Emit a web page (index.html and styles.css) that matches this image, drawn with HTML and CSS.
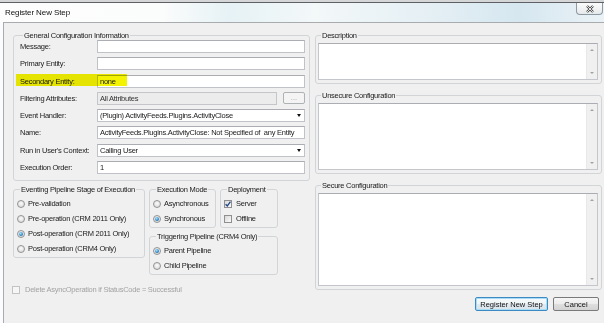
FILE: index.html
```html
<!DOCTYPE html>
<html lang="en">
<head>
    <meta charset="UTF-8">
    <meta name="viewport" content="width=device-width, initial-scale=1.0">
    <title>Register New Step</title>
    <link rel="stylesheet" href="styles.css">
</head>
<body>

<div class="window">
    <div class="strip"></div>
    <div class="titlebar">
        <span class="title">Register New Step</span>
        <button class="close">
            <svg width="10" height="8" viewBox="0 0 10 8">
                <path d="M2 1 L8 7 M8 1 L2 7" stroke="#4a4a4a" stroke-width="2.4" fill="none"/>
                <path d="M2 1 L8 7 M8 1 L2 7" stroke="#f4f4f4" stroke-width="0.9" fill="none"/>
            </svg>
        </button>
    </div>

    <div class="client">
        <div class="col-left">
            <fieldset class="group general">
                <legend>General Configuration Information</legend>
                <div class="field"><label>Message:</label><div class="input"></div></div>
                <div class="field"><label>Primary Entity:</label><div class="input"></div></div>
                <div class="field marked">
                    <label>Secondary Entity:</label><div class="input">none</div>
                    <span class="highlight"></span>
                </div>
                <div class="field">
                    <label>Filtering Attributes:</label>
                    <div class="input disabled">All Attributes</div>
                    <button class="dots">...</button>
                </div>
                <div class="field"><label>Event Handler:</label><div class="input combo">(Plugin) ActivityFeeds.Plugins.ActivityClose<span class="arrow"></span></div></div>
                <div class="field"><label>Name:</label><div class="input">ActivityFeeds.Plugins.ActivityClose: Not Specified of &nbsp;any Entity</div></div>
                <div class="field"><label>Run in User's Context:</label><div class="input combo">Calling User<span class="arrow"></span></div></div>
                <div class="field"><label>Execution Order:</label><div class="input">1</div></div>
            </fieldset>

            <div class="options">
                <fieldset class="group stage">
                    <legend>Eventing Pipeline Stage of Execution</legend>
                    <div class="opt"><span class="radio"></span>Pre-validation</div>
                    <div class="opt"><span class="radio"></span>Pre-operation (CRM 2011 Only)</div>
                    <div class="opt"><span class="radio on"></span>Post-operation (CRM 2011 Only)</div>
                    <div class="opt"><span class="radio"></span>Post-operation (CRM4 Only)</div>
                </fieldset>
                <fieldset class="group">
                    <legend>Execution Mode</legend>
                    <div class="opt"><span class="radio"></span>Asynchronous</div>
                    <div class="opt"><span class="radio on"></span>Synchronous</div>
                </fieldset>
                <fieldset class="group">
                    <legend>Deployment</legend>
                    <div class="opt"><span class="box">
                        <svg width="6" height="6" viewBox="0 0 6 6"><path d="M0.6 3.2 L2.3 5 L5.5 0.6" stroke="#23448a" stroke-width="1.3" fill="none"/></svg>
                    </span>Server</div>
                    <div class="opt"><span class="box"></span>Offline</div>
                </fieldset>
                <fieldset class="group trigger">
                    <legend>Triggering Pipeline (CRM4 Only)</legend>
                    <div class="opt"><span class="radio on"></span>Parent Pipeline</div>
                    <div class="opt"><span class="radio"></span>Child Pipeline</div>
                </fieldset>
            </div>

            <div class="opt delete"><span class="box off"></span>Delete AsyncOperation if StatusCode = Successful</div>
        </div>

        <div class="col-right">
            <fieldset class="group memo-group">
                <legend>Description</legend>
                <div class="memo desc"><div class="memo-body"></div><div class="scroll"><span class="up"></span><span class="down"></span></div></div>
            </fieldset>
            <fieldset class="group memo-group unsecure">
                <legend>Unsecure Configuration</legend>
                <div class="memo mid"><div class="memo-body"></div><div class="scroll"><span class="up"></span><span class="down"></span></div></div>
            </fieldset>
            <fieldset class="group memo-group secure">
                <legend>Secure Configuration</legend>
                <div class="memo tall"><div class="memo-body"></div><div class="scroll"><span class="up"></span><span class="down"></span></div></div>
            </fieldset>
            <div class="buttons">
                <button class="btn default">Register New Step</button>
                <button class="btn cancel">Cancel</button>
            </div>
        </div>
    </div>
</div>

</body>
</html>
```

FILE: styles.css
```css
body {
    margin: 0;
    font-family: "Liberation Sans", Arial, sans-serif;
    font-size: 7.5px;
    letter-spacing: -0.25px;
    line-height: 9px;
    color: #1a1a1a;
    background: #fff;
}
.window {
    width: 604px;
    height: 323px;
    overflow: hidden;
    background: #fbfcfd;
}
.strip {
    height: 2px;
    background: #d4d6d8;
    border-bottom: 1px solid #5e6063;
}
.titlebar {
    height: 19px;
    display: flex;
    justify-content: space-between;
    align-items: flex-start;
    background: linear-gradient(90deg, #fdfdfd 0%, #fbfcfc 27%, #e6f2f5 38%, #f3f8f9 52%, #e4eff4 72%, #d6e7f0 86%, #eaf2f6 100%);
}
.title {
    font-size: 8px;
    letter-spacing: -0.1px;
    line-height: 10px;
    margin: 5px 0 0 5px;
    color: #111;
}
.close {
    width: 27px;
    height: 12px;
    margin-right: 1px;
    padding: 0;
    border: 1px solid #8d99a3;
    border-top: none;
    border-radius: 0 0 4px 4px;
    background: linear-gradient(#fbfbfb, #e6e9eb);
    display: flex;
    align-items: center;
    justify-content: center;
}
.client {
    margin-left: 3px;
    height: 294px;
    border: 1px solid #a9acaf;
    border-right: none;
    background: #f0f0f0;
    display: flex;
    gap: 5px;
    padding: 8px 2px 0 9px;
}
.col-left {
    width: 297px;
    display: flex;
    flex-direction: column;
}
.col-right {
    width: 287px;
    display: flex;
    flex-direction: column;
}

/* group boxes */
.group {
    margin: 0;
    min-width: 0;
    border: 1px solid #d2d5d8;
    border-radius: 3px;
    padding: 2px 3px 1px 3px;
}
.group legend {
    padding: 0 1px;
    margin-left: 3px;
    line-height: 9px;
    height: 9px;
}
.general {
    padding: 0 4px 6px 6px;
}

/* fields */
.field {
    display: flex;
    align-items: center;
    height: 13px;
}
.field + .field {
    margin-top: 4.3px;
}
.field label {
    width: 77px;
    flex-shrink: 0;
}
.input {
    flex: 1;
    height: 13px;
    box-sizing: border-box;
    border: 1px solid #bfc2c6;
    border-top-color: #abadb3;
    background: #fff;
    padding-left: 2px;
    line-height: 11px;
    white-space: nowrap;
    overflow: hidden;
}
.input.disabled {
    background: #ececec;
    border-color: #c4c6c9;
    color: #333;
    margin-right: 6px;
}
.dots {
    width: 22px;
    height: 12px;
    padding: 0;
    border: 1px solid #adb2b5;
    border-radius: 2px;
    background: #f4f4f4;
    color: #a6a6a6;
    font: inherit;
    line-height: 6px;
}
.combo {
    display: flex;
    justify-content: space-between;
    align-items: center;
}
.arrow {
    margin-right: 3px;
    border-left: 2.5px solid transparent;
    border-right: 2.5px solid transparent;
    border-top: 3px solid #111;
}
.marked {
    position: relative;
}
.highlight {
    position: absolute;
    left: -4px;
    top: -0.5px;
    width: 111px;
    height: 12px;
    background: #f3f300;
    mix-blend-mode: multiply;
    pointer-events: none;
}

/* option groups */
.options {
    margin-top: 4px;
    display: grid;
    grid-template-columns: 132px 67px 58px;
    gap: 4px;
}
.stage {
    grid-row: span 2;
    align-self: start;
}
.trigger {
    grid-column: 2 / span 2;
}
.opt {
    display: flex;
    align-items: center;
    height: 15px;
    white-space: nowrap;
}
.radio {
    width: 8px;
    height: 8px;
    box-sizing: border-box;
    margin-right: 3px;
    border: 1px solid #939393;
    border-radius: 50%;
    background: radial-gradient(circle at 50% 40%, #fbfbfb 0%, #d9d9d9 85%);
    display: flex;
    align-items: center;
    justify-content: center;
}
.radio.on::after {
    content: "";
    width: 4px;
    height: 4px;
    border-radius: 50%;
    background: radial-gradient(circle at 40% 35%, #a8e4ff 0%, #2b86c9 60%, #1a4c84 100%);
}
.box {
    width: 8px;
    height: 8px;
    box-sizing: border-box;
    margin-right: 4px;
    border: 1px solid #8f8f8f;
    background: linear-gradient(135deg, #d8d8d8, #fbfbfb);
    display: flex;
    align-items: center;
    justify-content: center;
}
.delete {
    margin-top: 10px;
    height: 9px;
    margin-left: -1px;
    color: #a3a3a3;
}
.box.off {
    border-color: #c3c3c3;
    background: #f6f6f6;
    margin-right: 5px;
}

/* memo boxes */
.memo-group {
    padding: 3px 3px 3px 2px;
}
.unsecure {
    margin-top: 6.5px;
}
.secure {
    margin-top: 7px;
}
.memo {
    display: flex;
    border: 1px solid #c3c6ca;
    border-top-color: #abadb3;
    background: #fff;
    box-sizing: border-box;
}
.memo.desc { height: 37px; }
.memo.mid { height: 67px; }
.memo.tall { height: 93.5px; }
.memo-body {
    flex: 1;
}
.scroll {
    width: 10px;
    background: #f0f0f0;
    border-left: 1px solid #e8e8e8;
    display: flex;
    flex-direction: column;
    justify-content: space-between;
    align-items: center;
    padding: 5px 0;
}
.up {
    border-left: 2px solid transparent;
    border-right: 2px solid transparent;
    border-bottom: 2px solid #a2a2a2;
}
.down {
    border-left: 2px solid transparent;
    border-right: 2px solid transparent;
    border-top: 2px solid #a2a2a2;
}

/* buttons */
.buttons {
    margin-top: 7px;
    display: flex;
    justify-content: flex-end;
    gap: 5px;
    padding-right: 3px;
}
.btn {
    height: 14px;
    padding: 0;
    font: inherit;
    color: #111;
    border: 1px solid #7a7a7a;
    border-radius: 2px;
    background: linear-gradient(#f6f6f6 0%, #ececec 50%, #dfdfdf 51%, #d3d3d3 100%);
}
.btn.default {
    width: 73px;
    border-color: #3c8ac4;
    box-shadow: inset 0 0 0 1px #a9dcf5;
    background: linear-gradient(#f7fbfd 0%, #eef4f7 50%, #e2eaef 51%, #d9e3ea 100%);
}
.btn.cancel {
    width: 46px;
}
```
